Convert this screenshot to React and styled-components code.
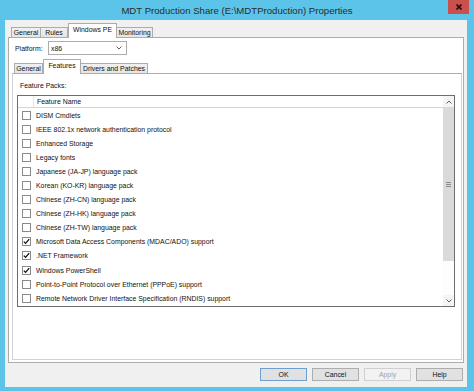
import React from 'react'
import styled, { createGlobalStyle } from 'styled-components'

const features = [
  { name: 'DISM Cmdlets', checked: false },
  { name: 'IEEE 802.1x network authentication protocol', checked: false },
  { name: 'Enhanced Storage', checked: false },
  { name: 'Legacy fonts', checked: false },
  { name: 'Japanese (JA-JP) language pack', checked: false },
  { name: 'Korean (KO-KR) language pack', checked: false },
  { name: 'Chinese (ZH-CN) language pack', checked: false },
  { name: 'Chinese (ZH-HK) language pack', checked: false },
  { name: 'Chinese (ZH-TW) language pack', checked: false },
  { name: 'Microsoft Data Access Components (MDAC/ADO) support', checked: true },
  { name: '.NET Framework', checked: true },
  { name: 'Windows PowerShell', checked: true },
  { name: 'Point-to-Point Protocol over Ethernet (PPPoE) support', checked: false },
  { name: 'Remote Network Driver Interface Specification (RNDIS) support', checked: false },
]

function CheckBox({ checked }) {
  return (
    <Box>
      {checked && (
        <svg width="7" height="7" viewBox="0 0 7 7">
          <path d="M0.8 3.6 L2.6 5.4 L6.2 1.2" fill="none" stroke="#111" strokeWidth="1.3" />
        </svg>
      )}
    </Box>
  )
}

function Chevron({ up }) {
  return (
    <svg width="6" height="4" viewBox="0 0 6 4">
      <path d={up ? 'M0.5 3.5 L3 1 L5.5 3.5' : 'M0.5 0.5 L3 3 L5.5 0.5'} fill="none" stroke="#606060" strokeWidth="1" />
    </svg>
  )
}

function App() {
  return (
    <>
      <GlobalStyle />
      <Window>
        <TitleBar>
          MDT Production Share (E:\MDTProduction) Properties
          <CloseButton>
            <svg width="6" height="6" viewBox="0 0 6 6">
              <path d="M0.5 0.5 L5.5 5.5 M5.5 0.5 L0.5 5.5" stroke="#2a0d0d" strokeWidth="1.6" />
            </svg>
          </CloseButton>
        </TitleBar>
        <Client>
          <TabStrip $indent={3}>
            <Tab $w={30}>General</Tab>
            <Tab $w={27}>Rules</Tab>
            <Tab $w={49} $active>Windows PE</Tab>
            <Tab $w={36}>Monitoring</Tab>
          </TabStrip>
          <OuterPanel>
            <PlatformRow>
              <Label>Platform:</Label>
              <Select>
                x86
                <Chevron />
              </Select>
            </PlatformRow>
            <TabStrip $indent={2}>
              <Tab $w={29}>General</Tab>
              <Tab $w={38} $active>Features</Tab>
              <Tab $w={67}>Drivers and Patches</Tab>
            </TabStrip>
            <InnerPanel>
              <SectionLabel>Feature Packs:</SectionLabel>
              <ListBox>
                <ListBody>
                  <HeaderRow>
                    <HeaderBlank />
                    <HeaderCell>Feature Name</HeaderCell>
                  </HeaderRow>
                  {features.map((f) => (
                    <Row key={f.name}>
                      <CheckBox checked={f.checked} />
                      {f.name}
                    </Row>
                  ))}
                </ListBody>
                <ScrollBar>
                  <ArrowBox><Chevron up /></ArrowBox>
                  <Thumb><Grip /></Thumb>
                  <Track />
                  <ArrowBox><Chevron /></ArrowBox>
                </ScrollBar>
              </ListBox>
            </InnerPanel>
          </OuterPanel>
          <ButtonRow>
            <Button $default>OK</Button>
            <Button>Cancel</Button>
            <Button $disabled>Apply</Button>
            <Button>Help</Button>
          </ButtonRow>
        </Client>
      </Window>
    </>
  )
}

const GlobalStyle = createGlobalStyle`
  html, body {
    margin: 0;
    padding: 0;
    background: #5cc4e9;
  }
  body {
    font-family: "Liberation Sans", Arial, sans-serif;
    color: #111;
  }
`

const Window = styled.div`
  width: 474px;
  height: 391px;
  box-sizing: border-box;
  padding: 0 7px 4px 5px;
  display: flex;
  flex-direction: column;
  background: #5cc4e9;
`

const TitleBar = styled.div`
  position: relative;
  height: 20px;
  margin: 0 -7px 0 -5px;
  display: flex;
  align-items: center;
  justify-content: center;
  font-size: 9.6px;
  color: #2b2b2b;
  padding-top: 1px;
  box-sizing: border-box;
`

const CloseButton = styled.div`
  position: absolute;
  top: 0;
  right: 5px;
  width: 21px;
  height: 14px;
  background: #c9504c;
  display: flex;
  align-items: center;
  justify-content: center;
`

const Client = styled.div`
  flex: 1;
  background: #f0f0f0;
  display: flex;
  flex-direction: column;
  padding: 4px 3px 0 3px;
  box-sizing: border-box;
`

const TabStrip = styled.div`
  display: flex;
  align-items: flex-end;
  height: 14px;
  padding-left: ${(p) => p.$indent}px;
  position: relative;
  z-index: 1;
  margin-bottom: -1px;
`

const Tab = styled.div`
  box-sizing: border-box;
  width: ${(p) => p.$w}px;
  height: ${(p) => (p.$active ? '15px' : '11px')};
  border: 1px solid #acacac;
  border-bottom: ${(p) => (p.$active ? 'none' : '1px solid #acacac')};
  border-left: ${(p) => (p.$active ? '1px solid #acacac' : 'none')};
  background: ${(p) => (p.$active ? '#ffffff' : 'linear-gradient(#f0f0f0, #e5e5e5)')};
  font-size: 6.9px;
  display: flex;
  justify-content: center;
  align-items: ${(p) => (p.$active ? 'flex-start' : 'center')};
  padding-top: ${(p) => (p.$active ? '2px' : '0')};
  white-space: nowrap;
  position: relative;
  z-index: ${(p) => (p.$active ? 2 : 1)};

  &:first-child {
    border-left: 1px solid #acacac;
  }
`

const OuterPanel = styled.div`
  flex: 1;
  background: #fff;
  border: 1px solid #acacac;
  display: flex;
  flex-direction: column;
  padding: 3px 1px 2px 3px;
`

const PlatformRow = styled.div`
  display: flex;
  align-items: center;
  height: 14px;
  padding-left: 3px;
  margin-bottom: 5px;
`

const Label = styled.span`
  width: 33px;
  font-size: 6.9px;
`

const Select = styled.div`
  box-sizing: border-box;
  width: 79px;
  height: 14px;
  border: 1px solid #acacac;
  display: flex;
  align-items: center;
  justify-content: space-between;
  padding: 0 4px 0 2px;
  font-size: 6.9px;
`

const InnerPanel = styled.div`
  flex: 1;
  border: 1px solid #d2d2d2;
  border-top-color: #acacac;
  display: flex;
  flex-direction: column;
  padding: 7px 6px 0 4px;
  background: #fff;
`

const SectionLabel = styled.div`
  font-size: 6.9px;
  line-height: 10px;
  padding-left: 3px;
  margin-bottom: 4px;
`

const ListBox = styled.div`
  display: flex;
  border: 1px solid #6d6d6d;
  height: 212px;
  box-sizing: border-box;
`

const ListBody = styled.div`
  flex: 1;
  display: flex;
  flex-direction: column;
`

const HeaderRow = styled.div`
  display: flex;
  height: 12px;
  box-sizing: border-box;
  border-bottom: 1px solid #d5d5d5;
  font-size: 6.9px;
`

const HeaderBlank = styled.div`
  width: 15px;
  border-right: 1px solid #e5e5e5;
`

const HeaderCell = styled.div`
  display: flex;
  align-items: center;
  padding-left: 3px;
`

const Row = styled.div`
  display: flex;
  align-items: center;
  gap: 5px;
  height: 14.1px;
  padding-left: 4px;
  font-size: 6.9px;
  white-space: nowrap;
`

const Box = styled.div`
  box-sizing: border-box;
  width: 9px;
  height: 9px;
  border: 1px solid #8a8a8a;
  background: #fff;
  display: flex;
  align-items: center;
  justify-content: center;
`

const ScrollBar = styled.div`
  width: 11px;
  display: flex;
  flex-direction: column;
  background: #f0f0f0;
`

const ArrowBox = styled.div`
  height: 11px;
  display: flex;
  align-items: center;
  justify-content: center;
  background: #f4f4f4;
`

const Thumb = styled.div`
  height: 154px;
  background: #dadada;
  display: flex;
  align-items: center;
  justify-content: center;
`

const Grip = styled.div`
  width: 5px;
  height: 5px;
  background: repeating-linear-gradient(#8c8c8c 0 1px, transparent 1px 2px);
`

const Track = styled.div`
  flex: 1;
  background: #fdfdfd;
`

const ButtonRow = styled.div`
  display: flex;
  justify-content: flex-end;
  gap: 5px;
  padding: 5px 1px 0 0;
  height: 24px;
  box-sizing: border-box;
`

const Button = styled.div`
  box-sizing: border-box;
  width: 47px;
  height: 13px;
  display: flex;
  align-items: center;
  justify-content: center;
  font-size: 6.9px;
  border: 1px solid ${(p) => (p.$default ? '#6f9fd0' : p.$disabled ? '#cfcfcf' : '#adadad')};
  background: ${(p) => (p.$disabled ? '#f2f2f2' : '#e1e1e1')};
  color: ${(p) => (p.$disabled ? '#a3a3a3' : '#111')};
`

export default App
